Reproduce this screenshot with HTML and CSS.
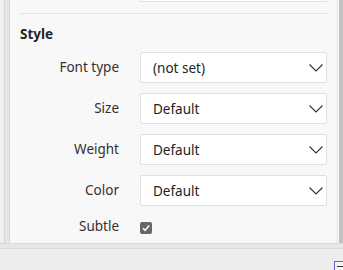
FILE: index.html
```html
<!DOCTYPE html>
<html>
<head>
<meta charset="utf-8">
<link rel="stylesheet" href="styles.css">
</head>
<body>
<div class="frame">
  <div class="gutter"></div>
  <div class="rail"></div>
  <div class="panel">
    <div class="stub-row"><div class="stub"></div></div>
    <div class="sep"></div>
    <h2 class="heading">Style</h2>
    <div class="form">
      <label class="label">Font type</label>
      <div class="select"><span>(not set)</span><svg class="chev" viewBox="0 0 14 8" width="14" height="8"><path d="M0.5 0.5 L7 7 L13.5 0.5" fill="none" stroke="#333" stroke-width="1.1"/></svg></div>
      <label class="label">Size</label>
      <div class="select"><span>Default</span><svg class="chev" viewBox="0 0 14 8" width="14" height="8"><path d="M0.5 0.5 L7 7 L13.5 0.5" fill="none" stroke="#333" stroke-width="1.1"/></svg></div>
      <label class="label">Weight</label>
      <div class="select"><span>Default</span><svg class="chev" viewBox="0 0 14 8" width="14" height="8"><path d="M0.5 0.5 L7 7 L13.5 0.5" fill="none" stroke="#333" stroke-width="1.1"/></svg></div>
      <label class="label">Color</label>
      <div class="select"><span>Default</span><svg class="chev" viewBox="0 0 14 8" width="14" height="8"><path d="M0.5 0.5 L7 7 L13.5 0.5" fill="none" stroke="#333" stroke-width="1.1"/></svg></div>
      <label class="label label-check">Subtle</label>
      <div class="check-cell"><span class="check"><svg viewBox="0 0 12 12" width="12" height="12"><path d="M3 6.3 L5.1 8.4 L9.2 3.6" fill="none" stroke="#fff" stroke-width="1.6"/></svg></span></div>
    </div>
  </div>
  <div class="track"><div class="thumb"></div></div>
</div>
<div class="footer">
  <div class="footer-band"></div>
  <div class="footer-main"><span class="corner-icon"><span class="dash"></span></span></div>
</div>
</body>
</html>
```
FILE: styles.css
```css
html, body {
  margin: 0;
  padding: 0;
}
body {
  width: 343px;
  height: 270px;
  overflow: hidden;
  background: #ededed;
  font-family: "Noto Sans", "Open Sans", "DejaVu Sans", sans-serif;
  color: #323130;
}
.frame {
  display: flex;
  height: 243px;
}
.gutter {
  width: 4px;
  background: #f0f0f0;
}
.rail {
  width: 4px;
  background: #e6e6e6;
  border-left: 1px solid #dadada;
  border-right: 1px solid #d6d6d6;
}
.panel {
  flex: 1;
  background: #f8f8f8;
  padding: 0 8px 0 10px;
}
.stub-row {
  height: 2px;
  padding-left: 120px;
}
.stub {
  width: 185px;
  height: 1px;
  background: #fff;
  border: 1px solid #e1e1e1;
  border-top: none;
}
.sep {
  margin-top: 11px;
  height: 1px;
  background: #e6e6e6;
}
.heading {
  margin: 10px 0 0 0;
  font-size: 13.5px;
  font-weight: 700;
  line-height: 20px;
  color: #252423;
}
.form {
  margin-top: 8px;
  display: grid;
  grid-template-columns: 99px 187px;
  column-gap: 21px;
  row-gap: 10px;
}
.label {
  text-align: right;
  font-size: 13.5px;
  line-height: 31px;
  color: #323130;
}
.select {
  box-sizing: border-box;
  height: 31px;
  background: #fff;
  border: 1px solid #e0e0e0;
  border-radius: 2px;
  display: flex;
  align-items: center;
  justify-content: space-between;
  padding: 0 3px 0 12px;
  font-size: 13.5px;
  color: #201f1e;
}
.chev {
  display: block;
}
.label-check {
  line-height: 20px;
  padding-top: 0;
}
.check-cell {
  height: 24px;
  display: flex;
  align-items: center;
}
.check {
  width: 12px;
  height: 12px;
  border-radius: 2px;
  background: #666;
  display: block;
}
.check svg {
  display: block;
}
.track {
  width: 7px;
  background: #f1f1f1;
  display: flex;
  justify-content: flex-end;
}
.thumb {
  width: 4px;
  background: #c2c2c2;
}
.footer {
  height: 27px;
}
.footer-band {
  height: 4px;
  background: #e7e7e7;
  border-top: 1px solid #d9d9d9;
  border-bottom: 1px solid #dcdcdc;
}
.footer-main {
  display: flex;
  justify-content: flex-end;
  padding-top: 12px;
}
.corner-icon {
  width: 9px;
  height: 10px;
  border: 1px solid #6b5fd0;
  border-right: none;
  box-sizing: border-box;
  background: #f4f4f4;
  display: flex;
  align-items: center;
  justify-content: flex-end;
}
.dash {
  width: 6px;
  height: 1px;
  background: #333;
}
```
